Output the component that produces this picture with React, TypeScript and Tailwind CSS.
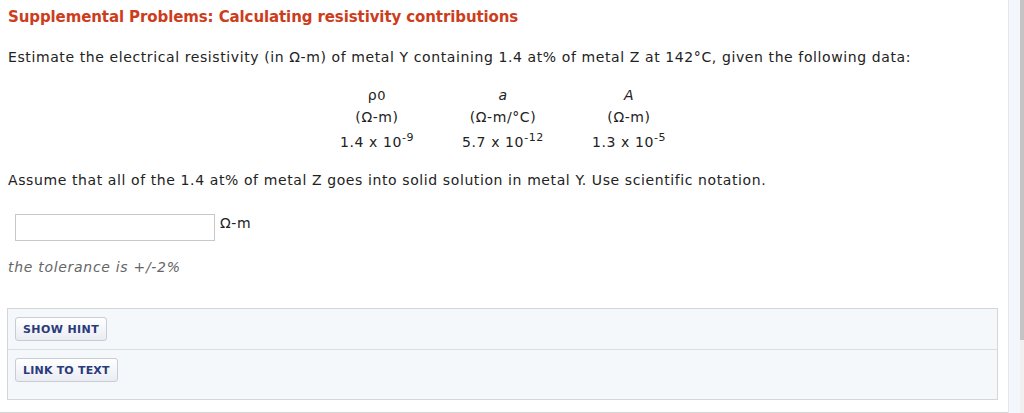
import React from "react";

export default function App() {
  const font = { fontFamily: '"DejaVu Sans", Verdana, sans-serif' };
  return (
    <div className="w-[1024px] h-[413px] bg-white flex overflow-hidden text-[#222]" style={font}>
      <div className="w-[1008px] h-[413px] flex flex-col border-b border-[#d4d4d4]">
        <div className="pl-2 pt-[7px] text-[15px] font-bold text-[#cc3d1c] leading-[20px] tracking-[-0.1px]">
          Supplemental Problems: Calculating resistivity contributions
        </div>
        <div className="pl-2 mt-[20px] text-[14px] leading-[20px] tracking-[0.6px]">
          Estimate the electrical resistivity (in Ω-m) of metal Y containing 1.4 at% of metal Z at 142°C, given the following data:
        </div>
        <div className="flex justify-center mt-[17px] text-[14px] tracking-[0.6px] pr-[2px]">
          <div className="flex flex-col items-center w-[126px]">
            <div className="h-[22px] leading-[22px]">ρ<span className="text-[13px]">0</span></div>
            <div className="h-[23px] leading-[22px]">(Ω-m)</div>
            <div className="h-[24px] leading-[26px]">1.4 x 10<sup className="text-[11px] relative -top-[6px] align-baseline">-9</sup></div>
          </div>
          <div className="flex flex-col items-center w-[126px]">
            <div className="h-[22px] leading-[22px] italic">a</div>
            <div className="h-[23px] leading-[22px]">(Ω-m/°C)</div>
            <div className="h-[24px] leading-[26px]">5.7 x 10<sup className="text-[11px] relative -top-[6px] align-baseline">-12</sup></div>
          </div>
          <div className="flex flex-col items-center w-[126px]">
            <div className="h-[22px] leading-[22px] italic">A</div>
            <div className="h-[23px] leading-[22px]">(Ω-m)</div>
            <div className="h-[24px] leading-[26px]">1.3 x 10<sup className="text-[11px] relative -top-[6px] align-baseline">-5</sup></div>
          </div>
        </div>
        <div className="pl-2 mt-[17px] text-[14px] leading-[20px] tracking-[0.6px]">
          Assume that all of the 1.4 at% of metal Z goes into solid solution in metal Y. Use scientific notation.
        </div>
        <div className="flex items-start mt-[24px] pl-[15px]">
          <div className="w-[200px] h-[27px] border border-[#c8c8c8] bg-white" />
          <div className="ml-[5px] text-[14px] leading-[16px] mt-[1px] tracking-[0.6px]">Ω-m</div>
        </div>
        <div className="pl-2 mt-[16px] text-[14px] italic text-[#666] leading-[20px] tracking-[0.7px]">the tolerance is +/-2%</div>
        <div className="ml-[7px] mt-[31px] w-[991px] border border-[#d3d6db] bg-[#f5f8fb] flex flex-col">
          <div className="h-[41px] border-b border-[#d9dde2] flex items-center pl-[7px]">
            <button className="h-[24px] px-[7px] rounded-[3px] border border-[#c9ccd4] bg-gradient-to-b from-white to-[#e9ecf2] text-[11px] font-bold text-[#2b3a7a] leading-none tracking-[0.4px]">
              SHOW HINT
            </button>
          </div>
          <div className="h-[49px] flex items-start pt-[8px] pl-[7px]">
            <button className="h-[24px] px-[7px] rounded-[3px] border border-[#c9ccd4] bg-gradient-to-b from-white to-[#e9ecf2] text-[11px] font-bold text-[#2b3a7a] leading-none tracking-[0.2px]">
              LINK TO TEXT
            </button>
          </div>
        </div>
      </div>
      <div className="w-[12px] h-[413px] border-l border-[#e3e6ec] bg-[#f3f6fb]" />
      <div className="w-[4px] h-[413px] flex flex-col bg-[#f0f0f0]">
        <div className="h-[340px] bg-[#c4c4c4]" />
      </div>
    </div>
  );
}
